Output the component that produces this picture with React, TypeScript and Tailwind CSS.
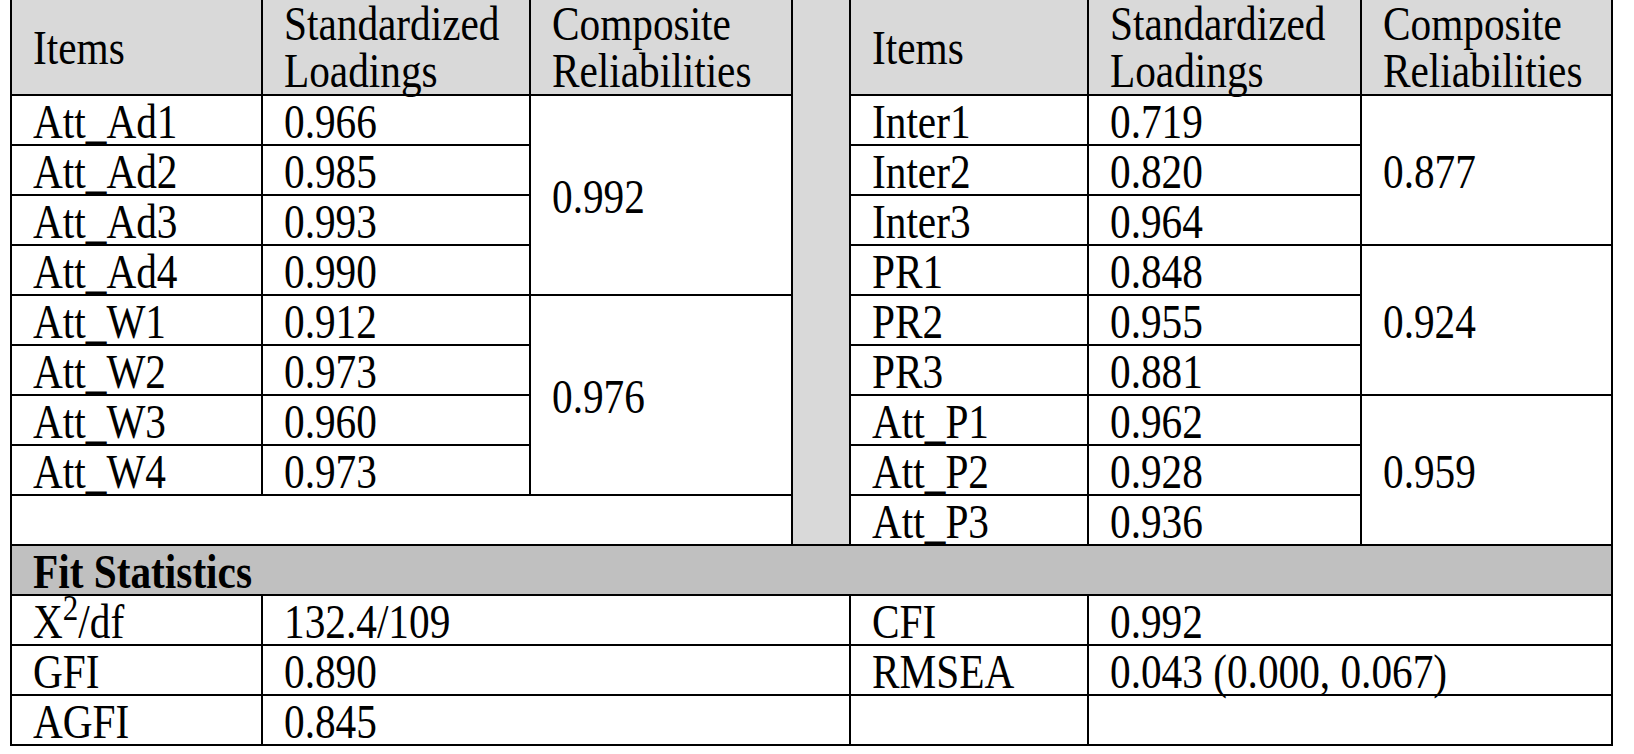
import React from 'react'

const leftRows = [
  ['Att_Ad1', '0.966'],
  ['Att_Ad2', '0.985'],
  ['Att_Ad3', '0.993'],
  ['Att_Ad4', '0.990'],
  ['Att_W1', '0.912'],
  ['Att_W2', '0.973'],
  ['Att_W3', '0.960'],
  ['Att_W4', '0.973'],
]
const leftGroups: Record<number, string> = { 0: '0.992', 4: '0.976' }

const rightRows = [
  ['Inter1', '0.719'],
  ['Inter2', '0.820'],
  ['Inter3', '0.964'],
  ['PR1', '0.848'],
  ['PR2', '0.955'],
  ['PR3', '0.881'],
  ['Att_P1', '0.962'],
  ['Att_P2', '0.928'],
  ['Att_P3', '0.936'],
]
const rightGroups: Record<number, string> = { 0: '0.877', 3: '0.924', 6: '0.959' }

const fitRows: [React.ReactNode, string, string, string][] = [
  [<>X<sup>2</sup>/df</>, '132.4/109', 'CFI', '0.992'],
  ['GFI', '0.890', 'RMSEA', '0.043 (0.000, 0.067)'],
  ['AGFI', '0.845', '', ''],
]

function T({ children }: { children: React.ReactNode }) {
  return <span className="inline-block origin-left scale-x-[0.86] whitespace-nowrap">{children}</span>
}

const td = 'h-[50px] border-2 border-black p-0 pl-[21px] pt-[4px] leading-[44px] align-middle'
const th = 'h-[94px] border-2 border-t-0 border-black bg-[#d9d9d9] p-0 pl-[21px] text-left font-normal align-middle leading-[47px]'

export default function App() {
  return (
    <div className="bg-white min-h-[754px] pl-[10px] font-['Liberation_Serif',serif] text-[48px] text-black">
      <table className="table-fixed border-collapse w-[1601px]">
        <colgroup>
          <col className="w-[251px]" />
          <col className="w-[268px]" />
          <col className="w-[262px]" />
          <col className="w-[58px]" />
          <col className="w-[238px]" />
          <col className="w-[273px]" />
          <col className="w-[251px]" />
        </colgroup>
        <tbody>
          {/* Header */}
          <tr>
            <th className={th}><T>Items</T></th>
            <th className={th}><T>Standardized<br />Loadings</T></th>
            <th className={th}><T>Composite<br />Reliabilities</T></th>
            <td rowSpan={10} className="border-2 border-t-0 border-black bg-[#d9d9d9] p-0" />
            <th className={th}><T>Items</T></th>
            <th className={th}><T>Standardized<br />Loadings</T></th>
            <th className={th}><T>Composite<br />Reliabilities</T></th>
          </tr>

          {rightRows.map((r, i) => (
            <tr key={r[0]}>
              {i < 8 ? (
                <>
                  <td className={td}><T>{leftRows[i][0]}</T></td>
                  <td className={td}><T>{leftRows[i][1]}</T></td>
                  {leftGroups[i] && (
                    <td rowSpan={4} className={td}><T>{leftGroups[i]}</T></td>
                  )}
                </>
              ) : (
                <td colSpan={3} className={td} />
              )}
              <td className={td}><T>{r[0]}</T></td>
              <td className={td}><T>{r[1]}</T></td>
              {rightGroups[i] && (
                <td rowSpan={3} className={td}><T>{rightGroups[i]}</T></td>
              )}
            </tr>
          ))}

          {/* Fit statistics */}
          <tr>
            <td colSpan={7} className={`${td} bg-[#c0c0c0] font-bold`}><T>Fit Statistics</T></td>
          </tr>
          {fitRows.map((r, i) => (
            <tr key={i}>
              <td className={td}><T>{r[0]}</T></td>
              <td colSpan={3} className={td}><T>{r[1]}</T></td>
              <td className={td}><T>{r[2]}</T></td>
              <td colSpan={2} className={td}><T>{r[3]}</T></td>
            </tr>
          ))}
        </tbody>
      </table>
    </div>
  )
}
